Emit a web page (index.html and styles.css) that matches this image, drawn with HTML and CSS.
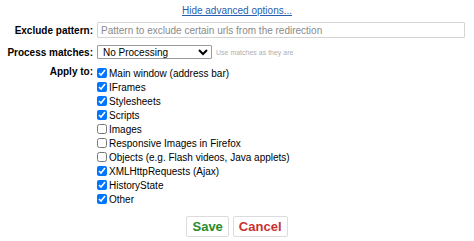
FILE: index.html
```html
<!DOCTYPE html>
<html lang="en">
<head>
  <meta charset="UTF-8" />
  <title>Advanced options</title>
  <link rel="stylesheet" href="styles.css">
</head>
<body>
  <div class="advanced">
    <p class="toggle"><a href="#">Hide advanced options...</a></p>

    <div class="form-grid">
      <label class="field-label" for="exclude">Exclude pattern:</label>
      <input type="text" id="exclude" class="text-input" placeholder="Pattern to exclude certain urls from the redirection">

      <label class="field-label process-label" for="process">Process matches:</label>
      <div class="select-row">
        <select id="process" class="select">
          <option>No Processing</option>
          <option>URL decode</option>
          <option>URL encode</option>
        </select>
        <span class="hint">Use matches as they are</span>
      </div>

      <span class="field-label apply-label">Apply to:</span>
      <div class="check-list">
        <label><input type="checkbox" checked> Main window (address bar)</label>
        <label><input type="checkbox" checked> IFrames</label>
        <label><input type="checkbox" checked> Stylesheets</label>
        <label><input type="checkbox" checked> Scripts</label>
        <label><input type="checkbox"> Images</label>
        <label><input type="checkbox"> Responsive Images in Firefox</label>
        <label><input type="checkbox"> Objects (e.g. Flash videos, Java applets)</label>
        <label><input type="checkbox" checked> XMLHttpRequests (Ajax)</label>
        <label><input type="checkbox" checked> HistoryState</label>
        <label><input type="checkbox" checked> Other</label>
      </div>
    </div>

    <div class="actions">
      <button class="btn save">Save</button>
      <button class="btn cancel">Cancel</button>
    </div>
  </div>
</body>
</html>
```

FILE: styles.css
```css
body {
  margin: 0;
  font-family: 'Liberation Sans', Arial, sans-serif;
  font-size: 10px;
  color: #000;
  background: #fff;
}

.advanced {
  width: 474px;
}

.toggle {
  margin: 0;
  padding-top: 5px;
  height: 17px;
  text-align: center;
  font-size: 10px;
}

.toggle a {
  color: #2a5db0;
  text-decoration: underline;
}

.form-grid {
  display: grid;
  grid-template-columns: 93px 1fr;
  column-gap: 4px;
  padding-right: 9px;
  align-items: center;
}

.field-label {
  text-align: right;
  font-weight: bold;
  font-size: 10px;
}

.text-input {
  box-sizing: border-box;
  height: 16px;
  width: 100%;
  margin: 0;
  padding: 0 3px;
  border: 1px solid #d4d4d4;
  border-radius: 1px;
  font-family: inherit;
  font-size: 10px;
}

.text-input::placeholder {
  color: #8a8a8a;
}

.process-label,
.select-row {
  margin-top: 7px;
}

.select-row {
  display: flex;
  align-items: center;
}

.select {
  box-sizing: border-box;
  width: 115px;
  height: 14px;
  margin: 0;
  padding: 0 1px;
  border: 1px solid #9a9a9a;
  border-radius: 1px;
  font-family: inherit;
  font-size: 10px;
  background: #fff;
}

.hint {
  margin-left: 4px;
  font-size: 7px;
  color: #b0b0b0;
}

.apply-label {
  align-self: start;
  margin-top: 7px;
}

.check-list {
  display: flex;
  flex-direction: column;
  margin-top: 7px;
}

.check-list label {
  display: flex;
  align-items: center;
  height: 14px;
  white-space: nowrap;
}

.check-list input {
  width: 10px;
  height: 10px;
  margin: 0 2px 0 0;
}

.actions {
  display: flex;
  justify-content: center;
  gap: 4px;
  margin-top: 10px;
}

.btn {
  box-sizing: border-box;
  font-family: inherit;
  font-size: 13px;
  font-weight: bold;
  padding: 0 5px;
  height: 21px;
  background: #fff;
  border: 1px solid #dcdcdc;
  border-radius: 2px;
}

.save {
  color: #2a8a2a;
}

.cancel {
  color: #c8302f;
}
```
